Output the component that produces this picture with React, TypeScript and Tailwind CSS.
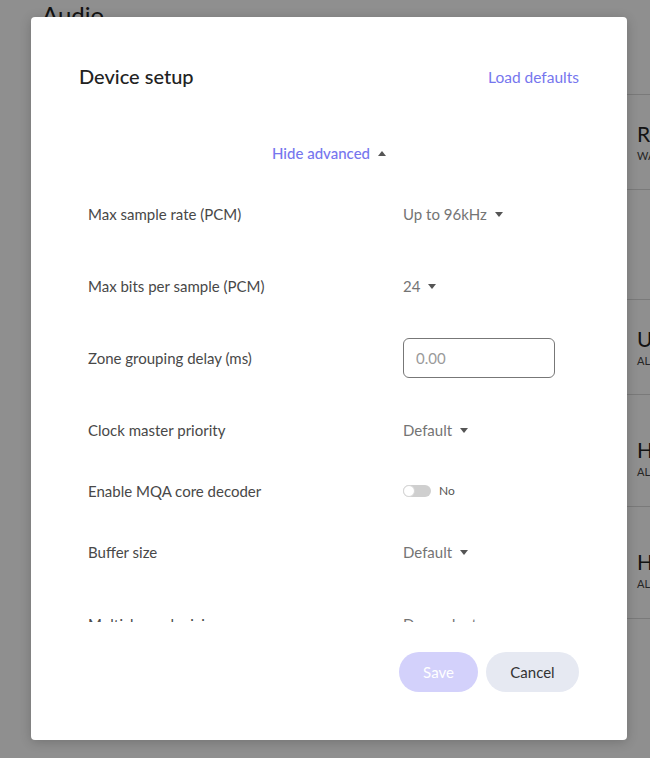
import React from "react";

function Caret({ up = false }: { up?: boolean }) {
  return (
    <svg width="8" height="5" viewBox="0 0 8 5" className={up ? "rotate-180" : ""}>
      <path d="M0 0h8L4 5z" fill="#555" />
    </svg>
  );
}

function SelectValue({ value }: { value: string }) {
  return (
    <div className="flex items-center gap-[8px] text-[15px] text-[#747474]">
      <span>{value}</span>
      <Caret />
    </div>
  );
}

const backItems = [
  { h: "h-[95px]", title: "Realtek Audio", sub: "WASAPI" },
  { h: "h-[110px]", title: "", sub: "" },
  { h: "h-[95px]", title: "USB Audio", sub: "ALSA" },
  { h: "h-[96px]", title: "HDMI 1", sub: "ALSA" },
  { h: "h-[96px]", title: "HDMI 2", sub: "ALSA" },
];

export default function App() {
  return (
    <div className="relative h-[758px] w-[650px] overflow-hidden bg-white font-['Lato',sans-serif] text-[#222]">
      {/* page behind the dialog */}
      <div className="flex h-full">
        <div className="flex-1 pl-[42px] pt-[1px]">
          <h1 className="text-[24px] leading-[28px]">Audio</h1>
        </div>
        <div className="w-[23px] overflow-hidden pt-[94px]">
          <div className="w-[200px] border-t border-[#d9d9d9]">
            {backItems.map((it, i) => (
              <div key={i} className={i === 2 || i === 3 ? "mb-[16px]" : ""}>
                <div className={`${it.h} flex flex-col justify-center border-b border-[#d9d9d9] pl-[10px]`}>
                  {it.title && (
                    <>
                      <div className="whitespace-nowrap text-[21px] leading-[24px] text-[#222]">{it.title}</div>
                      <div className="mt-[3px] whitespace-nowrap text-[11px] leading-[14px] text-[#444]">{it.sub}</div>
                    </>
                  )}
                </div>
              </div>
            ))}
          </div>
        </div>
      </div>

      {/* overlay */}
      <div className="absolute inset-0 bg-black/[0.44]" />

      {/* dialog */}
      <div className="absolute left-[31px] top-[17px] flex h-[723px] w-[596px] flex-col rounded-[4px] bg-white shadow-[0_2px_12px_rgba(0,0,0,0.2)]">
        <div className="flex items-center justify-between px-[48px] pt-[45px]">
          <h2 className="text-[20px] font-medium leading-[28px] text-[#222]">Device setup</h2>
          <button className="pt-[3px] text-[15.5px] text-[#7676ee]">Load defaults</button>
        </div>

        <div className="flex-1 overflow-hidden px-[57px] pt-[38px]">
          <div className="flex h-[50px] items-center justify-center gap-[8px]">
            <span className="text-[15px] font-medium text-[#7676ee]">Hide advanced</span>
            <Caret up />
          </div>

          <div className="grid grid-cols-[315px_1fr] text-[15px] text-[#484848]">
            <div className="flex h-[72px] items-center">Max sample rate (PCM)</div>
            <div className="flex h-[72px] items-center">
              <SelectValue value="Up to 96kHz" />
            </div>

            <div className="flex h-[72px] items-center">Max bits per sample (PCM)</div>
            <div className="flex h-[72px] items-center">
              <SelectValue value="24" />
            </div>

            <div className="flex h-[72px] items-center">Zone grouping delay (ms)</div>
            <div className="flex h-[72px] items-center">
              <input
                placeholder="0.00"
                className="h-[40px] w-[152px] rounded-[6px] border border-[#777] px-[12px] text-[15px] placeholder:text-[#9a9a9a] focus:outline-none"
              />
            </div>

            <div className="flex h-[72px] items-center">Clock master priority</div>
            <div className="flex h-[72px] items-center">
              <SelectValue value="Default" />
            </div>

            <div className="flex h-[50px] items-center">Enable MQA core decoder</div>
            <div className="flex h-[50px] items-center gap-[8px]">
              <div className="flex h-[12px] w-[28px] items-center rounded-full bg-[#cfcfcf]">
                <div className="h-[12px] w-[12px] rounded-full border border-[#d6d6d6] bg-white" />
              </div>
              <span className="text-[12px] text-[#555]">No</span>
            </div>

            <div className="flex h-[72px] items-center">Buffer size</div>
            <div className="flex h-[72px] items-center">
              <SelectValue value="Default" />
            </div>

            <div className="flex h-[72px] items-center">Multichannel mixing</div>
            <div className="flex h-[72px] items-center">
              <SelectValue value="Dependent on zone" />
            </div>
          </div>
        </div>

        <div className="flex justify-end gap-[8px] px-[48px] pb-[48px] pt-[30px]">
          <button className="h-[40px] w-[79px] rounded-full bg-[#d3d1fb] text-[15px] text-white">Save</button>
          <button className="h-[40px] w-[93px] rounded-full bg-[#e6e9f2] text-[15px] text-[#333]">Cancel</button>
        </div>
      </div>
    </div>
  );
}
